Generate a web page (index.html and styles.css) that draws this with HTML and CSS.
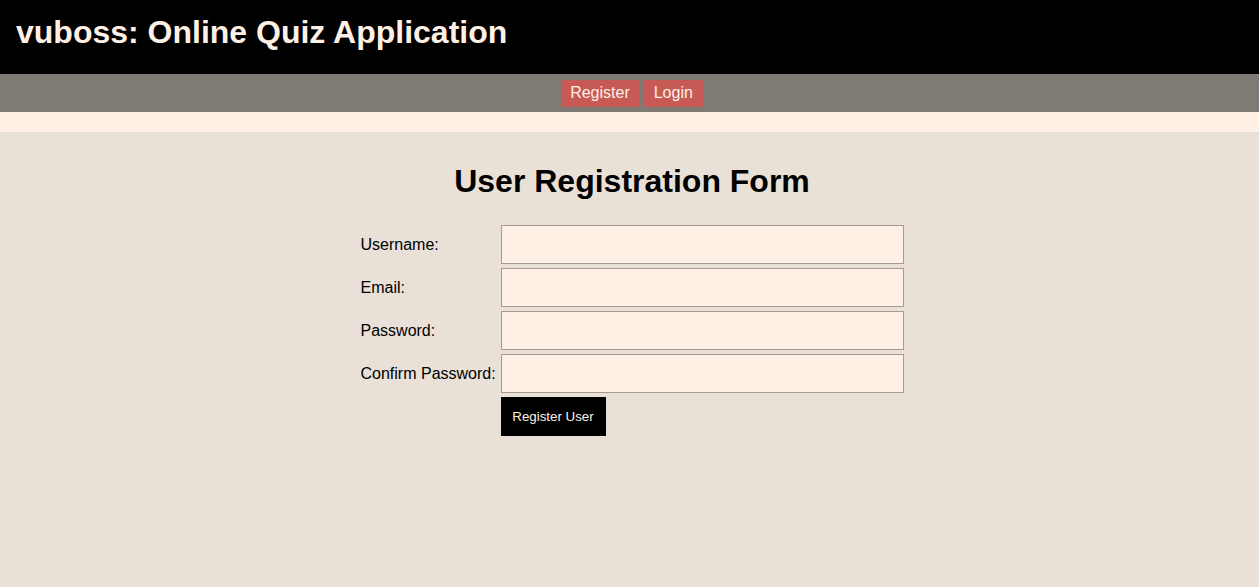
FILE: index.html
```html
<!DOCTYPE html>
<html lang="en">
<head>
<meta charset="utf-8">
<title>vuboss: Online Quiz Application</title>
<link rel="stylesheet" href="styles.css">
</head>
<body>
<header class="site-header">
  <h1 class="site-title">vuboss: Online Quiz Application</h1>
</header>
<nav class="site-nav">
  <a class="nav-btn" href="#">Register</a>
  <a class="nav-btn" href="#">Login</a>
</nav>
<div class="strip"></div>
<main class="content">
  <h2 class="form-title">User Registration Form</h2>
  <form class="reg-form">
    <label class="lbl" for="u">Username:</label>
    <input class="field" id="u" type="text">
    <label class="lbl" for="e">Email:</label>
    <input class="field" id="e" type="email">
    <label class="lbl" for="p">Password:</label>
    <input class="field" id="p" type="password">
    <label class="lbl" for="c">Confirm Password:</label>
    <input class="field" id="c" type="password">
    <span></span>
    <div><button class="submit" type="button">Register User</button></div>
  </form>
</main>
</body>
</html>
```

FILE: styles.css
```css
* { box-sizing: border-box; }
html, body { margin: 0; padding: 0; height: 100%; }
body {
  font-family: "Liberation Sans", Arial, sans-serif;
  background: #e9e0d8;
  color: #000;
  display: flex;
  flex-direction: column;
}
.site-header {
  background: #000;
  height: 74px;
  padding: 11px 16px 0;
}
.site-title {
  margin: 0;
  font-size: 32px;
  font-weight: bold;
  line-height: 42px;
  color: #fff0e5;
}
.site-nav {
  background: #807a75;
  height: 38px;
  display: flex;
  justify-content: center;
  align-items: flex-start;
  gap: 5px;
  padding-top: 6px;
  padding-left: 5px;
}
.nav-btn {
  display: block;
  background: #c75a55;
  color: #fff0e5;
  text-decoration: none;
  font-size: 16px;
  line-height: 18px;
  padding: 4px 9px 5px;
}
.nav-btn + .nav-btn {
  padding: 4px 10px 5px;
}
.strip {
  height: 20px;
  background: #fff0e5;
}
.content {
  flex: 1;
  padding-top: 31px;
  padding-left: 5px;
}
.form-title {
  margin: 0 0 25px;
  text-align: center;
  font-size: 32px;
  line-height: 37px;
  font-weight: bold;
}
.reg-form {
  display: grid;
  grid-template-columns: 140px 403px;
  row-gap: 4px;
  width: 543px;
  margin: 0 auto;
}
.lbl {
  font-size: 16px;
  display: flex;
  align-items: center;
  height: 39px;
  white-space: nowrap;
}
.field {
  height: 39px;
  width: 403px;
  margin: 0;
  background: #fff0e6;
  border: 1px solid #a69b94;
  font: inherit;
}
.submit {
  height: 39px;
  width: 105px;
  margin: 0;
  border: none;
  background: #000;
  color: #fff0e5;
  font-family: "Liberation Sans", Arial, sans-serif;
  font-size: 13.33px;
  padding: 0;
}
```
